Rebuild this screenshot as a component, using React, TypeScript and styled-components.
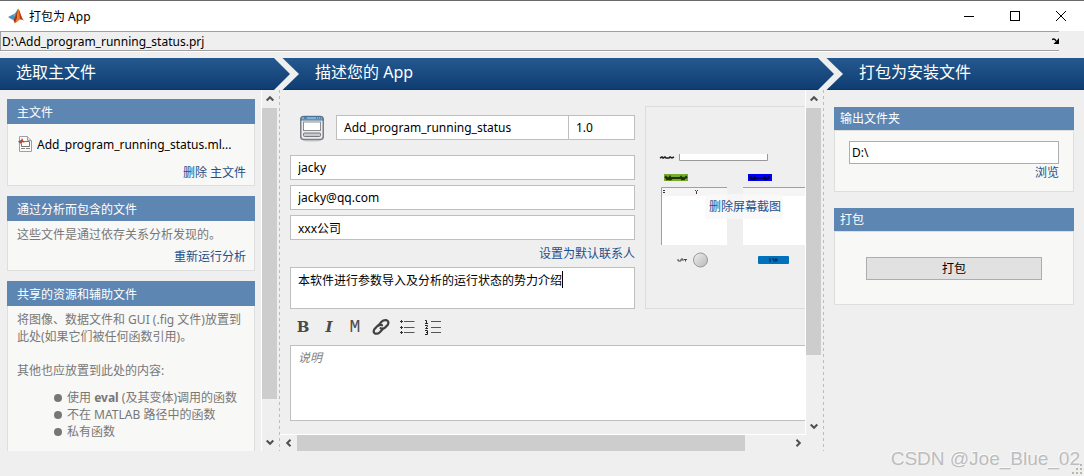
import React from "react";
import styled, { createGlobalStyle } from "styled-components";

const LINK = "#1d4f8c";

const GlobalStyle = createGlobalStyle`
  *, *::before, *::after { box-sizing: border-box; }
  body {
    margin: 0;
    background: #efefef;
    color: #000;
    font-family: "Noto Sans", "Noto Sans CJK SC", sans-serif;
    font-size: 12px;
    line-height: 17px;
  }
  button, input, textarea { font: inherit; color: inherit; border-radius: 0; outline: none; }
  button { padding: 0; border: 0; background: none; }
  h1, h2, h3, p, ul { margin: 0; padding: 0; font-size: inherit; font-weight: 400; }
  svg { display: block; }
`;

const Window = styled.div`
  position: relative;
  display: flex;
  flex-direction: column;
  min-height: 100vh;
  overflow: hidden;
`;

const TitleBar = styled.header`
  display: flex;
  align-items: center;
  height: 31px;
  padding-left: 8px;
  border-top: 1px solid #6b696b;
  background: #fff;
`;

const Title = styled.h1`
  flex: 1;
  padding-left: 5px;
`;

const CaptionButton = styled.button`
  display: grid;
  place-items: center;
  width: 46px;
  height: 30px;
`;

const PathBar = styled.div`
  display: flex;
  align-items: center;
  height: 20px;
  margin: 0 25px 7px 0;
  border: solid #a0a0a0;
  border-width: 1px 0 1px 1px;
  box-shadow: 0 1px #fff;
`;

const PathInput = styled.input`
  flex: 1;
  min-width: 0;
  height: 18px;
  padding: 0 0 0 1px;
  border: 0;
  background: transparent;
`;

const Steps = styled.div`
  display: grid;
  grid-template-columns: 274px 1fr 266px;
  height: 32px;
  background: linear-gradient(#24598f, #0f3d72);
  border-bottom: 1px solid #0b3466;
`;

const Step = styled.h2<{ $first?: boolean }>`
  display: flex;
  gap: 15px;
  height: 32px;
  padding-left: ${(p) => (p.$first ? 16 : 0)}px;
  color: #fff;
  font-size: 16px;
  line-height: 28px;
`;

const Columns = styled.main`
  display: grid;
  grid-template-columns: 280px 1fr 260px;
  height: 361px;
`;

const Pane = styled.section<{ $divided?: boolean }>`
  display: flex;
  min-width: 0;
  min-height: 0;
  padding-right: ${(p) => (p.$divided ? 2 : 0)}px;
  ${(p) =>
    p.$divided &&
    `
    &::after {
      content: "";
      width: 1px;
      margin: 0 0 0 2px;
      margin-right: -2px;
      background: repeating-linear-gradient(#bdbdbd 0 3px, transparent 3px 6px);
    }
  `}
`;

const Viewport = styled.div`
  display: flex;
  flex-direction: column;
  flex: 1;
  min-width: 0;
  min-height: 0;
  overflow: hidden;
  border-right: 1px solid #fff;
`;

const SideList = styled(Viewport)`
  gap: 10px;
  padding: 9px 6px 0 7px;
`;

const Card = styled.section`
  flex: none;
`;

const CardTitle = styled.h3<{ $compact?: boolean }>`
  height: ${(p) => (p.$compact ? 23 : 25)}px;
  padding-left: ${(p) => (p.$compact ? 6 : 10)}px;
  background: #5e86b2;
  color: #fff;
  line-height: ${(p) => (p.$compact ? 23 : 27)}px;
`;

const CardBody = styled.div<{ $height: number }>`
  display: flex;
  flex-direction: column;
  min-height: ${(p) => p.$height}px;
  padding: 5px 8px 0 9px;
  border: 1px solid #dedede;
  border-top: 0;
  background: #f8f8f6;
  color: #777;
`;

const OutputBody = styled(CardBody)`
  padding: 10px 14px 0;
  border-top: 1px solid #dedede;
`;

const FileRow = styled.div`
  display: flex;
  align-items: center;
  gap: 5px;
  height: 30px;
  padding-left: 1px;
  color: #000;
`;

const FileName = styled.span`
  overflow: hidden;
  white-space: nowrap;
`;

const Link = styled.a`
  align-self: flex-end;
  color: ${LINK};
  text-decoration: none;
`;

const SideLink = styled(Link)`
  margin-top: 5px;
`;

const Paragraph = styled.p`
  white-space: nowrap;
  & + & { margin-top: 17px; }
`;

const Bullets = styled.ul`
  margin-top: 10px;
  list-style: none;
  white-space: nowrap;
`;

const Bullet = styled.li`
  display: flex;
  align-items: center;
  gap: 5px;
  padding-left: 37px;
  &::before {
    content: "";
    width: 8px;
    height: 8px;
    border-radius: 4px;
    background: #777;
  }
`;

const Bar = styled.div<{ $across?: boolean }>`
  display: flex;
  flex: none;
  flex-direction: ${(p) => (p.$across ? "row" : "column")};
  ${(p) => (p.$across ? "height: 16px;" : "width: 15px;")}
`;

const BarArrow = styled.button<{ $across?: boolean }>`
  display: grid;
  place-items: center;
  flex: none;
  width: ${(p) => (p.$across ? 17 : 15)}px;
  height: ${(p) => (p.$across ? 16 : 18)}px;
`;

const Track = styled.div<{ $across?: boolean }>`
  flex: 1;
  display: flex;
  flex-direction: ${(p) => (p.$across ? "row" : "column")};
`;

const Thumb = styled.div`
  background: #cdcdcd;
`;

const MiddleBody = styled.div`
  display: grid;
  grid-template-columns: 1fr 15px;
  grid-template-rows: 1fr 16px;
  flex: 1;
  min-width: 0;
`;

const FormView = styled(Viewport)`
  padding: 16px 0 0 10px;
  border-bottom: 1px solid #fff;
`;

const FormTop = styled.div`
  display: grid;
  grid-template-columns: 345px 1fr;
  column-gap: 10px;
`;

const Form = styled.form`
  display: flex;
  flex-direction: column;
  gap: 5px;
  padding-top: 9px;
`;

const NameRow = styled.div`
  display: grid;
  grid-template-columns: 36px 233px 1fr;
  margin-bottom: 7px;
  padding-left: 10px;
`;

const Field = styled.input<{ $joined?: boolean }>`
  width: 100%;
  min-width: 0;
  height: 25px;
  padding: 0 7px;
  border: 1px solid #bfbfbf;
  border-left-width: ${(p) => (p.$joined ? 0 : 1)}px;
  background: #fff;
`;

const SummaryBox = styled.div`
  position: relative;
`;

const Summary = styled.textarea`
  display: block;
  width: 100%;
  height: 42px;
  padding: 4px 7px;
  border: 1px solid #bfbfbf;
  resize: none;
`;

const Caret = styled.span`
  position: absolute;
  top: 4px;
  left: calc(8px + 22em);
  width: 1px;
  height: 17px;
  background: #000;
`;

const Toolbar = styled.div`
  display: flex;
  gap: 2px;
  padding: 7px 0 7px 1px;
`;

const Tool = styled.button`
  display: grid;
  place-items: center;
  width: 24px;
  height: 22px;
  color: #4a4a4a;
`;

const Letter = styled.span<{ $kind: "bold" | "italic" | "mono" }>`
  font-family: ${(p) => (p.$kind === "mono" ? '"Liberation Mono", monospace' : '"DejaVu Serif", serif')};
  font-size: ${(p) => (p.$kind === "mono" ? 18 : 15)}px;
  font-weight: ${(p) => (p.$kind === "mono" ? 400 : 700)};
  font-style: ${(p) => (p.$kind === "italic" ? "italic" : "normal")};
`;

const Description = styled.textarea`
  display: block;
  flex: none;
  height: 76px;
  padding: 3px 7px;
  border: 1px solid #bfbfbf;
  border-right: 0;
  resize: none;
  &::placeholder { color: #808080; font-style: italic; opacity: 1; }
`;

const Preview = styled.div`
  position: relative;
  height: 203px;
  overflow: hidden;
  border: 1px solid #dcdcdc;
  border-right: 0;
`;

const PreviewLink = styled.a`
  position: absolute;
  top: 87px;
  left: 59px;
  padding: 4px 2px 4px 4px;
  border-radius: 4px;
  background: rgba(248, 248, 248, 0.8);
  color: ${LINK};
  text-decoration: none;
  white-space: nowrap;
`;

const Output = styled.div`
  display: flex;
  flex: 1;
  flex-direction: column;
  gap: 16px;
  padding: 17px 10px 0;
`;

const FolderInput = styled.input`
  width: 100%;
  height: 23px;
  padding: 0 2px;
  border: 1px solid #abadb3;
  background: #fff;
  color: #000;
`;

const PackageButton = styled.button`
  height: 23px;
  margin: 15px 17px 0;
  border: 1px solid #adadad;
  background: #e1e1e1;
  color: #000;
`;

const Watermark = styled.div`
  position: absolute;
  right: 4px;
  bottom: 5px;
  color: #bdbdbd;
  font-family: "Liberation Sans", sans-serif;
  font-size: 19px;
  line-height: 24px;
  text-shadow: -1px -1px #fafafa;
`;

const Grip = styled.svg`
  position: absolute;
  right: 1px;
  bottom: 1px;
`;

const MatlabLogo = () => (
  <svg width="16" height="16" viewBox="0 0 16 16">
    <path d="M0 9 5 6.6 8 8.6 5.4 12 3 11z" fill="#4f8fc0" />
    <path d="M5 6.6 7 5.4 10.2.5 8.2 8.4z" fill="#5d8ba8" />
    <path d="M10.2.4 7.4 8.2 5.4 12l1.4 3.2L9 12.4z" fill="#a8320f" />
    <path d="M10.2.4C11.8 2.4 13 9 15.8 12.6 13.6 11.4 12 11 10.2 13L6.8 15.4 9.2 9z" fill="#ee7a25" />
    <path d="M10.8 1.200C12 3.400 13 9 15.8 12.6 14 11.2 13 11 12 11.200z" fill="#b03a18" />
  </svg>
);

const Chevron = () => (
  <svg width="26" height="32" viewBox="0 0 26 32">
    <path d="M0 0H8.5L25 16 8.5 32H0L16 16z" fill="#efefef" />
  </svg>
);

const MFileIcon = () => (
  <svg width="14" height="16" viewBox="0 0 14 16">
    <path d="M1.500.5h8l4 4v11h-12z" fill="#fafafa" stroke="#a0a0a0" />
    <path d="M9.5.5v4h4" fill="#ddd" stroke="#a0a0a0" />
    <path d="M5 5.5h6.5v5H3.500V8" fill="none" stroke="#777" />
    <path d="M3 12.500h4M8 12.500h4" stroke="#888" />
    <path d="M0 5.500 2.500 4l1.500 1-2 2.500z" fill="#3c79b4" />
    <path d="M4 2 6.500 7 4.500 6 3 8.500 2 6.500z" fill="#c8431b" />
  </svg>
);

const AppIcon = () => (
  <svg width="24" height="28" viewBox="0 0 24 28">
    <ellipse cx="12" cy="25.500" rx="9" ry="1.500" fill="#d6d6d6" />
    <rect x=".75" y="1.500" width="22.500" height="23" rx="3" fill="#ededee" stroke="#7c7f86" strokeWidth="1.500" />
    <path d="M1 5V4Q1 1.500 3.500 1.500h17Q23 1.500 23 4V5z" fill="#7fb0d8" stroke="#4a7094" />
    <path d="M4 3h3M16 3h1M18 3h1M20 3h1" stroke="#33597d" />
    <rect x="3.500" y="7" width="17" height="8.500" fill="#fff" stroke="#8b8d92" />
    <rect x="3.500" y="18" width="17" height="3.500" rx="1" fill="#c9c9cc" stroke="#77797f" />
  </svg>
);

const Arrow = ({ turn }: { turn: number }) => (
  <svg width="8" height="8" viewBox="0 0 8 8">
    <path d="M.7 5.500 4 2.200 7.300 5.500" fill="none" stroke="#505050" strokeWidth="2" transform={`rotate(${turn} 4 4)`} />
  </svg>
);

const LinkIcon = () => (
  <svg width="18" height="18" viewBox="0 0 18 18" fill="none" stroke="#404040" strokeWidth="2.200" strokeLinecap="round">
    <path d="M6.500 7.500 9.500 3.800Q11.500 1.800 14.500 2.200 17.500 3.600 15.800 6.800L13 9.600Q11 11.400 8.600 10.200" />
    <path d="M10 7.300Q7.600 6.400 5.600 7.800L2.400 11.200Q.8 14 2.800 15.400 5.600 16.400 7.800 14.200L10.600 11.200" />
  </svg>
);

const BulletListIcon = () => (
  <svg width="15" height="16" viewBox="0 0 15 16">
    <path d="M4 2.500h10.500M4 8.500h10.500M4 13.500h10.500" stroke="#555" />
    <path d="M1.500 1v3M0 2.500h3M1.500 7v3M0 8.500h3M1.500 12v3M0 13.500h3" stroke="#333" />
  </svg>
);

const NumberListIcon = () => (
  <svg width="16" height="16" viewBox="0 0 16 16">
    <path d="M6 2.500h10M6 8.500h10M6 13.500h10" stroke="#555" />
    <path
      d="M0 1.500h1.500v3M0 4.500h3M0 6.500h2.500v1l-2 2h2.500M0 11.500h2.500v4H0M1 13.500h1.500"
      fill="none"
      stroke="#222"
    />
  </svg>
);

const Squiggle = ({ x, y, w, color }: { x: number; y: number; w: number; color: string }) => (
  <path
    d={`M${x} ${y + 1}l1-1 1 2 1-1 1 1 1-2 1 2 1-1h${w - 14}l1-1 1 2 1-1 1 1 1-1 1-1 1 1`}
    stroke={color}
    strokeWidth="2"
    fill="none"
  />
);

const AppShot = () => (
  <svg width="159" height="201" viewBox="0 0 159 201">
    <rect x="33" y="47" width="89" height="7" fill="#fff" />
    <path d="M33.500 47v6.500h88V47" fill="none" stroke="#999" />
    <path d="M14 51l2-1 1 1 2-1 1 1h3l1-1 2 1 2-1" fill="none" stroke="#222" strokeWidth="1.500" />
    <rect x="18" y="67" width="24" height="7" fill="#77ac30" />
    <Squiggle x={19} y={70} w={22} color="#1f3305" />
    <rect x="102" y="67" width="24" height="7" fill="#0000ff" />
    <Squiggle x={103} y={70} w={21} color="#000055" />
    <rect x="15" y="80" width="66" height="58" fill="#fff" />
    <rect x="15" y="80" width="66" height="9" fill="#f5f5f5" />
    <path d="M81 80.500H15.500V138" fill="none" stroke="#a0a0a0" />
    <path d="M17 83.500h2M17 85.500h2" stroke="#334" />
    <path d="M49 83l1.500 1.500L52 83M50.500 84.500V87" stroke="#533" fill="none" />
    <rect x="97" y="80" width="62" height="58" fill="#fff" />
    <rect x="97" y="80" width="62" height="9" fill="#f5f5f5" />
    <path d="M97 80.500h62" stroke="#a0a0a0" />
    <path d="M32 152v2h3v-2h2v2M38 152.500h3M39.500 152v2.500" fill="none" stroke="#444" />
    <defs>
      <linearGradient id="lamp" x1="0" y1="0" x2="1" y2="1">
        <stop offset="0" stopColor="#eee" />
        <stop offset="1" stopColor="#b8b8b8" />
      </linearGradient>
    </defs>
    <circle cx="54.500" cy="153" r="7" fill="url(#lamp)" stroke="#999" />
    <rect x="112" y="149" width="31" height="8" rx="1" fill="#0072bd" />
    <path d="M124 151v4M126 152h2v3M130 151v4M129 153h3" fill="none" stroke="#00233c" />
  </svg>
);

const VerticalBar = ({ thumb }: { thumb: number }) => (
  <Bar>
    <BarArrow type="button" aria-label="Scroll up"><Arrow turn={0} /></BarArrow>
    <Track><Thumb style={{ height: thumb }} /></Track>
    <BarArrow type="button" aria-label="Scroll down"><Arrow turn={180} /></BarArrow>
  </Bar>
);

export default function App() {
  return (
    <>
      <GlobalStyle />
      <Window>
        <TitleBar>
          <MatlabLogo />
          <Title>打包为 App</Title>
          <CaptionButton aria-label="Minimize">
            <svg width="10" height="10"><path d="M0 5.500h10" stroke="#000" /></svg>
          </CaptionButton>
          <CaptionButton aria-label="Maximize">
            <svg width="10" height="10"><rect x=".5" y=".5" width="9" height="9" fill="none" stroke="#000" /></svg>
          </CaptionButton>
          <CaptionButton aria-label="Close">
            <svg width="10" height="10"><path d="M0 0 10 10M10 0 0 10" stroke="#000" /></svg>
          </CaptionButton>
        </TitleBar>

        <PathBar>
          <PathInput aria-label="Project" readOnly value="D:\Add_program_running_status.prj" />
          <button type="button" aria-label="Dock">
            <svg width="7" height="6" viewBox="0 0 7 6">
              <path d="M0 1.500Q2.500 0 4 3" fill="none" stroke="#000" strokeWidth="1.500" />
              <path d="M7 0V6H1.500z" fill="#000" />
            </svg>
          </button>
        </PathBar>

        <Steps>
          <Step $first>选取主文件</Step>
          <Step><Chevron />描述您的 App</Step>
          <Step><Chevron />打包为安装文件</Step>
        </Steps>

        <Columns>
          <Pane $divided>
            <SideList>
              <Card>
                <CardTitle>主文件</CardTitle>
                <CardBody $height={62}>
                  <FileRow>
                    <MFileIcon />
                    <FileName>Add_program_running_status.ml...</FileName>
                  </FileRow>
                  <SideLink href="#main">删除 主文件</SideLink>
                </CardBody>
              </Card>
              <Card>
                <CardTitle>通过分析而包含的文件</CardTitle>
                <CardBody $height={50}>
                  <Paragraph>这些文件是通过依存关系分析发现的。</Paragraph>
                  <SideLink href="#analyze">重新运行分析</SideLink>
                </CardBody>
              </Card>
              <Card>
                <CardTitle>共享的资源和辅助文件</CardTitle>
                <CardBody $height={170}>
                  <Paragraph>
                    将图像、数据文件和 GUI (.fig 文件)放置到
                    <br />
                    此处(如果它们被任何函数引用)。
                  </Paragraph>
                  <Paragraph>其他也应放置到此处的内容:</Paragraph>
                  <Bullets>
                    <Bullet><span>使用 <b>eval</b> (及其变体)调用的函数</span></Bullet>
                    <Bullet><span>不在 MATLAB 路径中的函数</span></Bullet>
                    <Bullet><span>私有函数</span></Bullet>
                  </Bullets>
                </CardBody>
              </Card>
            </SideList>
            <VerticalBar thumb={291} />
          </Pane>

          <Pane $divided>
            <MiddleBody>
              <FormView>
                <FormTop>
                  <Form>
                    <NameRow>
                      <AppIcon />
                      <Field aria-label="App name" defaultValue="Add_program_running_status" />
                      <Field $joined aria-label="Version" defaultValue="1.0" />
                    </NameRow>
                    <Field aria-label="Author" defaultValue="jacky" />
                    <Field aria-label="Email" defaultValue="jacky@qq.com" />
                    <Field aria-label="Company" defaultValue="xxx公司" />
                    <Link href="#contact">设置为默认联系人</Link>
                    <SummaryBox>
                      <Summary aria-label="Summary" defaultValue="本软件进行参数导入及分析的运行状态的势力介绍" />
                      <Caret />
                    </SummaryBox>
                  </Form>
                  <Preview>
                    <AppShot />
                    <PreviewLink href="#screenshot">删除屏幕截图</PreviewLink>
                  </Preview>
                </FormTop>
                <Toolbar>
                  <Tool type="button"><Letter $kind="bold">B</Letter></Tool>
                  <Tool type="button"><Letter $kind="italic">I</Letter></Tool>
                  <Tool type="button"><Letter $kind="mono">M</Letter></Tool>
                  <Tool type="button" aria-label="Link"><LinkIcon /></Tool>
                  <Tool type="button" aria-label="Bulleted list"><BulletListIcon /></Tool>
                  <Tool type="button" aria-label="Numbered list"><NumberListIcon /></Tool>
                </Toolbar>
                <Description aria-label="Description" placeholder="说明" />
              </FormView>
              <VerticalBar thumb={247} />
              <Bar $across>
                <BarArrow $across type="button" aria-label="Scroll left"><Arrow turn={270} /></BarArrow>
                <Track $across><Thumb style={{ width: "91%" }} /></Track>
                <BarArrow $across type="button" aria-label="Scroll right"><Arrow turn={90} /></BarArrow>
              </Bar>
            </MiddleBody>
          </Pane>

          <Pane>
            <Output>
              <Card>
                <CardTitle $compact>输出文件夹</CardTitle>
                <OutputBody $height={62}>
                  <FolderInput aria-label="输出文件夹" defaultValue="D:\" />
                  <Link href="#browse">浏览</Link>
                </OutputBody>
              </Card>
              <Card>
                <CardTitle $compact>打包</CardTitle>
                <OutputBody $height={74}>
                  <PackageButton type="button">打包</PackageButton>
                </OutputBody>
              </Card>
            </Output>
          </Pane>
        </Columns>

        <Watermark>CSDN @Joe_Blue_02</Watermark>
        <Grip width="11" height="11" viewBox="0 0 11 11">
          <path d="M8 0h2v2H8zM4 4h2v2H4zM8 4h2v2H8zM0 8h2v2H0zM4 8h2v2H4zM8 8h2v2H8z" fill="#b8b8a8" />
        </Grip>
      </Window>
    </>
  );
}
